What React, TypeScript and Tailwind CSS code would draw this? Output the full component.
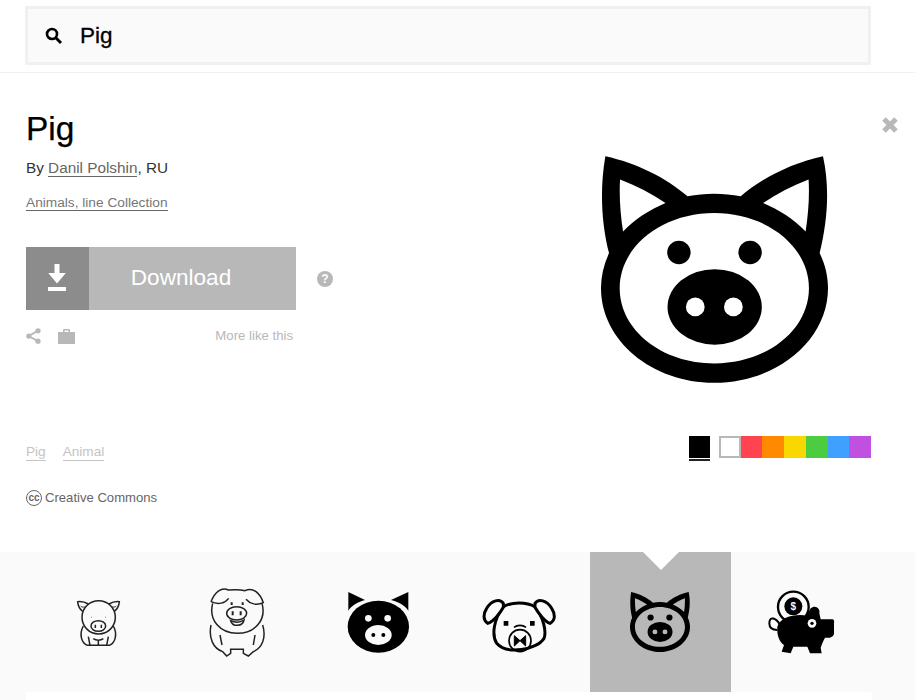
import React from "react";

const PIG =
  "M77 170 C170 190 260 235 323 290 C375 280 430 280 482 290 C545 235 635 190 728 170 C750 270 740 370 718 460 C735 495 743 530 743 565 C743 720 590 848 403 848 C215 848 64 720 64 565 C64 530 72 495 88 460 C65 370 60 270 77 170 Z " +
  "M121 240 C170 258 215 282 257 310 C210 330 165 358 130 395 C122 345 118 290 121 240 Z " +
  "M685 240 C636 258 591 282 549 310 C596 330 641 358 676 395 C684 345 688 290 685 240 Z " +
  "M403 340 C246 340 120 440 120 565 C120 690 246 790 403 790 C560 790 686 690 686 565 C686 440 560 340 403 340 Z";

function PigFace({ className }: { className: string }) {
  return (
    <svg viewBox="64 170 679 678" className={className}>
      <path d={PIG} fillRule="evenodd" fill="#000" />
      <circle cx="297" cy="458" r="35" fill="#000" />
      <circle cx="510" cy="458" r="35" fill="#000" />
      <ellipse cx="404" cy="621" rx="141" ry="113" fill="#000" />
      <circle cx="346" cy="621" r="28" fill="#fff" className="pig-n" />
      <circle cx="460" cy="621" r="28" fill="#fff" className="pig-n" />
    </svg>
  );
}

function Cell({ children, selected }: { children: React.ReactNode; selected?: boolean }) {
  return (
    <div className={`relative flex items-center justify-center h-[140px] ${selected ? "bg-[#b8b8b8]" : ""}`}>
      {selected && (
        <div className="absolute top-0 left-1/2 -translate-x-1/2 w-0 h-0 border-l-[18px] border-r-[18px] border-t-[18px] border-l-transparent border-r-transparent border-t-white" />
      )}
      {children}
    </div>
  );
}

const thumb = "w-[141px] h-[140px]";

export default function App() {
  return (
    <div className="w-[915px] h-[700px] overflow-hidden bg-white font-['Liberation_Sans',Arial,sans-serif]">
      <header className="h-[73px] border-b border-[#f0f0f0] pt-[6px] pl-[25px] pr-[44px]">
        <div className="h-[59px] bg-[#fafafa] border-[3px] border-[#f0f0f0] flex items-center pl-[17px] gap-[17px]">
          <svg viewBox="0 0 18 18" className="w-[18px] h-[18px]">
            <circle cx="7" cy="7" r="5" fill="none" stroke="#000" strokeWidth="2.6" />
            <path d="M10.8 10.8 L16 16" stroke="#000" strokeWidth="3" />
          </svg>
          <span className="text-[22.5px] text-black [-webkit-text-stroke:0.3px_#000]">Pig</span>
        </div>
      </header>

      <section className="h-[479px] pl-[26px] pr-[44px] flex relative">
        <div className="w-[575px] shrink-0 flex flex-col">
          <h1 className="text-[33.5px] leading-[40px] mt-[36px] text-black [-webkit-text-stroke:0.25px_#000]">Pig</h1>
          <p className="text-[15.3px] leading-[20px] mt-[9px] text-[#333]">
            By <a className="text-[#666] border-b border-[#666]">Danil Polshin</a>, RU
          </p>
          <p className="mt-[15px] leading-[17px]">
            <a className="text-[13.7px] text-[#777] border-b border-[#666]">Animals, line Collection</a>
          </p>
          <div className="flex items-center mt-[36px]">
            <div className="flex w-[270px] h-[63px] bg-[#b8b8b8]">
              <div className="w-[63px] h-[63px] bg-[#8c8c8c] flex items-center justify-center">
                <svg viewBox="0 0 18 27" className="w-[18px] h-[27px] mb-[2px] mr-[2px]">
                  <path d="M6.5 0 H11.5 V9 H17.8 L9 19.5 L0.2 9 H6.5 Z" fill="#fff" />
                  <rect x="0" y="23" width="18" height="4" fill="#fff" />
                </svg>
              </div>
              <div className="flex-1 flex items-center justify-center text-white text-[22.6px] pr-[23px] pb-[1px]">Download</div>
            </div>
            <div className="ml-[21px] w-[16px] h-[16px] rounded-full bg-[#b8b8b8] text-white text-[12px] font-bold flex items-center justify-center">?</div>
          </div>
          <div className="flex items-center w-[270px] mt-[16px] h-[20px]">
            <svg viewBox="0 0 16 17" className="w-[15px] h-[16px]">
              <path d="M12.5 3 L3 8.5 L12.5 14" fill="none" stroke="#b8b8b8" strokeWidth="2" />
              <circle cx="12.8" cy="3" r="2.8" fill="#b8b8b8" />
              <circle cx="3" cy="8.5" r="2.8" fill="#b8b8b8" />
              <circle cx="12.8" cy="14" r="2.8" fill="#b8b8b8" />
            </svg>
            <svg viewBox="0 0 17 15" className="w-[17px] h-[15px] ml-[17px]">
              <path d="M0 3 H5 V1 Q5 0 6 0 H11 Q12 0 12 1 V3 H17 V15 H0 Z M6.5 1.5 V3 H10.5 V1.5 Z" fillRule="evenodd" fill="#b8b8b8" />
            </svg>
            <span className="ml-auto mr-[3px] text-[13.2px] text-[#b8b8b8]">More like this</span>
          </div>
          <div className="flex gap-[17px] text-[13.6px] text-[#c4c4c4] mt-[98px] leading-[16px]">
            <a className="border-b border-[#c4c4c4]">Pig</a>
            <a className="border-b border-[#c4c4c4]">Animal</a>
          </div>
          <div className="flex items-center mt-[29px] text-[13.1px] text-[#666] leading-[16px]">
            <span className="w-[16px] h-[16px] rounded-full border border-[#666] flex items-center justify-center text-[10px] font-bold leading-none mr-[3px]">cc</span>
            Creative Commons
          </div>
        </div>

        <div className="flex-1 flex flex-col">
          <div className="mt-[83px] h-[280px]">
            <PigFace className="w-[227px] h-[227px]" />
          </div>
          <div className="flex items-start ml-[88px]">
            <div className="w-[21px] h-[25px] bg-black border-b-[2px] border-[#222] shadow-[inset_0_-1px_0_#fff]" />
            <div className="grid grid-cols-7 ml-[9px] h-[22px] w-[152px]">
              <div className="border-2 border-[#b8b8b8] bg-white" />
              <div className="bg-[#ff4350]" />
              <div className="bg-[#ff8a00]" />
              <div className="bg-[#f8d800]" />
              <div className="bg-[#4ccc40]" />
              <div className="bg-[#40a0ff]" />
              <div className="bg-[#c050e0]" />
            </div>
          </div>
        </div>

        <svg viewBox="0 0 18 18" className="absolute right-[16px] top-[43px] w-[18px] h-[18px]">
          <path d="M3 3 L15 15 M15 3 L3 15" stroke="#b8b8b8" strokeWidth="5" />
        </svg>
      </section>

      <section className="h-[148px] bg-[#fafafa] px-[26px]">
        <div className="grid grid-cols-6 w-[846px]">
          <Cell>
            <svg viewBox="-42 -54 423 420" className={thumb} fill="none" stroke="#222" strokeWidth="4.5">
              <circle cx="176" cy="142" r="50" />
              <path d="M145 102 C135 96 123 94 113 95 C114 108 120 118 128 124 M207 102 C217 96 228 94 238 95 C237 108 231 118 223 124" />
              <path d="M122 108 C126 112 130 112 134 110 M229 108 C225 112 221 112 217 110" strokeWidth="3" />
              <path d="M130 168 C118 190 122 218 142 226 H208 C228 218 232 190 220 168" />
              <ellipse cx="175" cy="168" rx="22" ry="16" fill="#fafafa" />
              <path d="M166 164 V174 M184 164 V174 M153 142 h1 M197 142 h1 M160 206 C168 212 182 212 190 206 M175 210 V226 M145 200 L150 226 M205 200 L200 226" />
            </svg>
          </Cell>
          <Cell>
            <svg viewBox="381 -54 423 420" className={thumb} fill="none" stroke="#222" strokeWidth="4.5">
              <path d="M513 165 C505 205 520 235 548 245 L560 258 L572 250 L572 238 H610 L610 250 L625 258 L640 245 C665 235 680 205 668 165 M540 195 L546 225 M645 195 L640 225" />
              <path d="M518 100 C505 150 540 190 592 190 C645 190 680 150 666 100" fill="#fafafa" />
              <path d="M513 95 C525 65 545 50 565 60 C590 58 600 58 615 62 C640 50 660 70 670 98 C650 107 630 102 618 88 M513 95 C535 105 555 100 566 85" />
              <ellipse cx="590" cy="130" rx="30" ry="20" />
              <path d="M578 124 V136 M602 124 V136 M575 97 V105 M608 97 V105" strokeWidth="6" />
              <path d="M572 152 C585 158 600 158 612 150 C608 170 578 172 572 152 Z" />
            </svg>
          </Cell>
          <Cell>
            <svg viewBox="-36 -54 423 420" className={thumb}>
              <ellipse cx="175" cy="170" rx="92" ry="78" fill="#000" />
              <path d="M85 66 L135 90 C115 96 95 106 85 122 Z M265 66 L213 90 C235 96 255 106 265 122 Z" fill="#000" />
              <circle cx="145" cy="145" r="10" fill="#fafafa" />
              <circle cx="203" cy="145" r="10" fill="#fafafa" />
              <ellipse cx="175" cy="195" rx="40" ry="30" fill="#fafafa" />
              <circle cx="160" cy="195" r="6" fill="#000" />
              <circle cx="190" cy="195" r="6" fill="#000" />
            </svg>
          </Cell>
          <Cell>
            <svg viewBox="387 -54 423 420" className={thumb} fill="none" stroke="#000" strokeWidth="9">
              <path d="M550 110 C575 95 620 95 645 110 C670 140 680 185 672 205 C650 240 560 255 530 220 C515 195 520 150 550 110 Z" fill="#fafafa" />
              <path d="M550 112 C540 130 520 155 503 160 C488 150 490 130 500 115 C515 90 540 85 550 100 Z" fill="#fafafa" />
              <path d="M645 112 C655 130 675 155 690 160 C708 150 705 130 695 115 C680 90 655 85 645 100 Z" fill="#fafafa" />
              <circle cx="600" cy="212" r="33" strokeWidth="5" />
              <path d="M582 172 C592 164 608 164 618 172" strokeWidth="5" />
              <path d="M583 197 L600 212 L617 197 V228 L600 212 L583 228 Z" fill="#000" strokeWidth="3" />
              <path d="M551 160 h14 M630 160 h14" strokeWidth="14" />
            </svg>
          </Cell>
          <Cell selected>
            <PigFace className="w-[60px] h-[60px] mr-[2px] [&_.pig-n]:fill-[#b8b8b8]" />
          </Cell>
          <Cell>
            <svg viewBox="453 21 423 420" className={thumb}>
              <circle cx="640" cy="186" r="46" fill="none" stroke="#000" strokeWidth="7" />
              <circle cx="640" cy="184" r="27" fill="#000" />
              <text x="640" y="194" textAnchor="middle" fontSize="30" fontWeight="700" fill="#fafafa">$</text>
              <path d="M600 240 C590 220 568 210 568 235 C568 250 580 255 592 255" fill="none" stroke="#000" strokeWidth="6" />
              <path d="M592 245 C600 215 650 205 680 212 L692 190 C705 178 722 190 718 205 L722 223 H758 Q764 225 762 235 V268 Q760 275 750 278 H735 C728 290 725 300 722 308 L725 325 L690 325 L682 305 H640 L632 325 L605 320 L612 300 C598 290 590 270 592 245 Z" fill="#000" />
              <circle cx="696" cy="235" r="13" fill="#fafafa" />
              <circle cx="696" cy="235" r="5" fill="#000" />
            </svg>
          </Cell>
        </div>
        <div className="w-[846px] h-[8px] bg-white rounded-t-[2px]" />
      </section>
    </div>
  );
}
